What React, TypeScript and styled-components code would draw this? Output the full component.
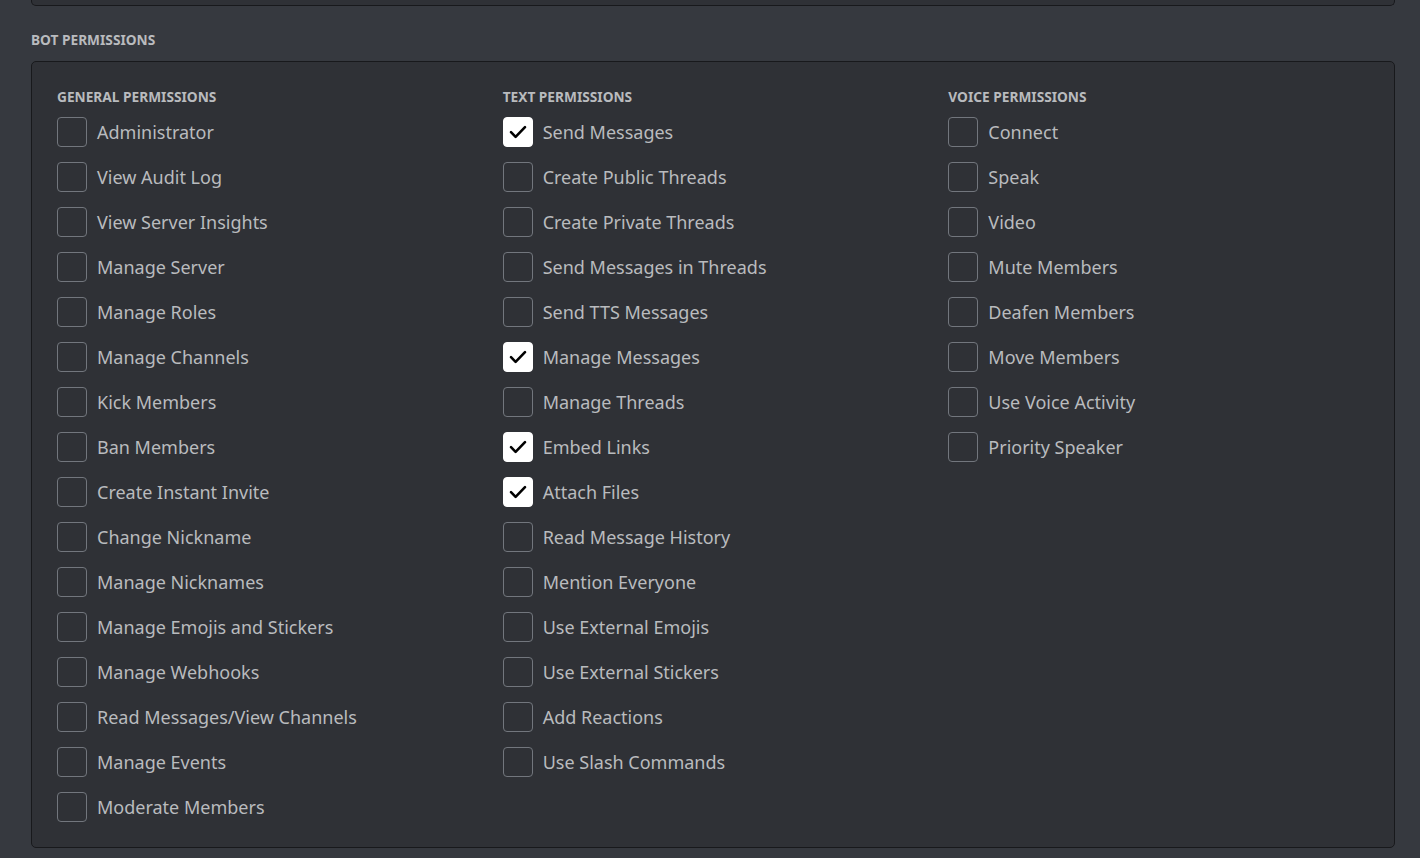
import React from "react";
import styled, { createGlobalStyle } from "styled-components";

const GlobalStyle = createGlobalStyle`
  html, body {
    margin: 0;
    padding: 0;
    background: #36393f;
  }
  body {
    font-family: "Noto Sans", "Open Sans", sans-serif;
  }
`;

type Perm = { label: string; checked?: boolean };

const columns: { title: string; perms: Perm[] }[] = [
  {
    title: "General Permissions",
    perms: [
      { label: "Administrator" },
      { label: "View Audit Log" },
      { label: "View Server Insights" },
      { label: "Manage Server" },
      { label: "Manage Roles" },
      { label: "Manage Channels" },
      { label: "Kick Members" },
      { label: "Ban Members" },
      { label: "Create Instant Invite" },
      { label: "Change Nickname" },
      { label: "Manage Nicknames" },
      { label: "Manage Emojis and Stickers" },
      { label: "Manage Webhooks" },
      { label: "Read Messages/View Channels" },
      { label: "Manage Events" },
      { label: "Moderate Members" },
    ],
  },
  {
    title: "Text Permissions",
    perms: [
      { label: "Send Messages", checked: true },
      { label: "Create Public Threads" },
      { label: "Create Private Threads" },
      { label: "Send Messages in Threads" },
      { label: "Send TTS Messages" },
      { label: "Manage Messages", checked: true },
      { label: "Manage Threads" },
      { label: "Embed Links", checked: true },
      { label: "Attach Files", checked: true },
      { label: "Read Message History" },
      { label: "Mention Everyone" },
      { label: "Use External Emojis" },
      { label: "Use External Stickers" },
      { label: "Add Reactions" },
      { label: "Use Slash Commands" },
    ],
  },
  {
    title: "Voice Permissions",
    perms: [
      { label: "Connect" },
      { label: "Speak" },
      { label: "Video" },
      { label: "Mute Members" },
      { label: "Deafen Members" },
      { label: "Move Members" },
      { label: "Use Voice Activity" },
      { label: "Priority Speaker" },
    ],
  },
];

const Checkbox = ({ checked }: { checked?: boolean }) => (
  <Box $checked={checked}>
    {checked && (
      <svg width="18" height="14" viewBox="0 0 18 14" fill="none">
        <path
          d="M2 7.2l4.6 4.6L16 2.2"
          stroke="#000000"
          strokeWidth="2.6"
          strokeLinecap="round"
          strokeLinejoin="round"
        />
      </svg>
    )}
  </Box>
);

export default function App() {
  return (
    <Page>
      <GlobalStyle />
      <TopPanelEdge />
      <SectionTitle>Bot Permissions</SectionTitle>
      <Panel>
        {columns.map((col) => (
          <Column key={col.title}>
            <ColumnTitle>{col.title}</ColumnTitle>
            <List>
              {col.perms.map((p) => (
                <Row key={p.label}>
                  <Checkbox checked={p.checked} />
                  <Label>{p.label}</Label>
                </Row>
              ))}
            </List>
          </Column>
        ))}
      </Panel>
    </Page>
  );
}

const Page = styled.div`
  min-height: 858px;
  box-sizing: border-box;
  padding: 0 25px 0 31px;
  background: #36393f;
`;

const TopPanelEdge = styled.div`
  height: 5px;
  background: #2f3136;
  border: 1px solid #18191c;
  border-top: none;
  border-radius: 0 0 5px 5px;
`;

const SectionTitle = styled.h2`
  margin: 26px 0 13px;
  font-size: 13.7px;
  line-height: 16px;
  font-weight: 700;
  text-transform: uppercase;
  color: #b9bbbe;
`;

const Panel = styled.div`
  display: grid;
  grid-template-columns: repeat(3, 1fr);
  padding: 27px 0 25px 25px;
  background: #2f3136;
  border: 1px solid #18191c;
  border-radius: 5px;
`;

const Column = styled.div`
  display: flex;
  flex-direction: column;
`;

const ColumnTitle = styled.h3`
  margin: 0 0 12px;
  font-size: 13.7px;
  line-height: 16px;
  font-weight: 700;
  text-transform: uppercase;
  color: #b9bbbe;
`;

const List = styled.div`
  display: flex;
  flex-direction: column;
  gap: 15px;
`;

const Row = styled.label`
  display: flex;
  align-items: center;
  gap: 10px;
  cursor: pointer;
`;

const Box = styled.span<{ $checked?: boolean }>`
  box-sizing: border-box;
  width: 30px;
  height: 30px;
  flex-shrink: 0;
  display: flex;
  align-items: center;
  justify-content: center;
  border-radius: 4px;
  border: 1px solid ${(p) => (p.$checked ? "#ffffff" : "#72767d")};
  background: ${(p) => (p.$checked ? "#ffffff" : "transparent")};
`;

const Label = styled.span`
  font-size: 18px;
  line-height: 24px;
  color: #b9bbbe;
`;
